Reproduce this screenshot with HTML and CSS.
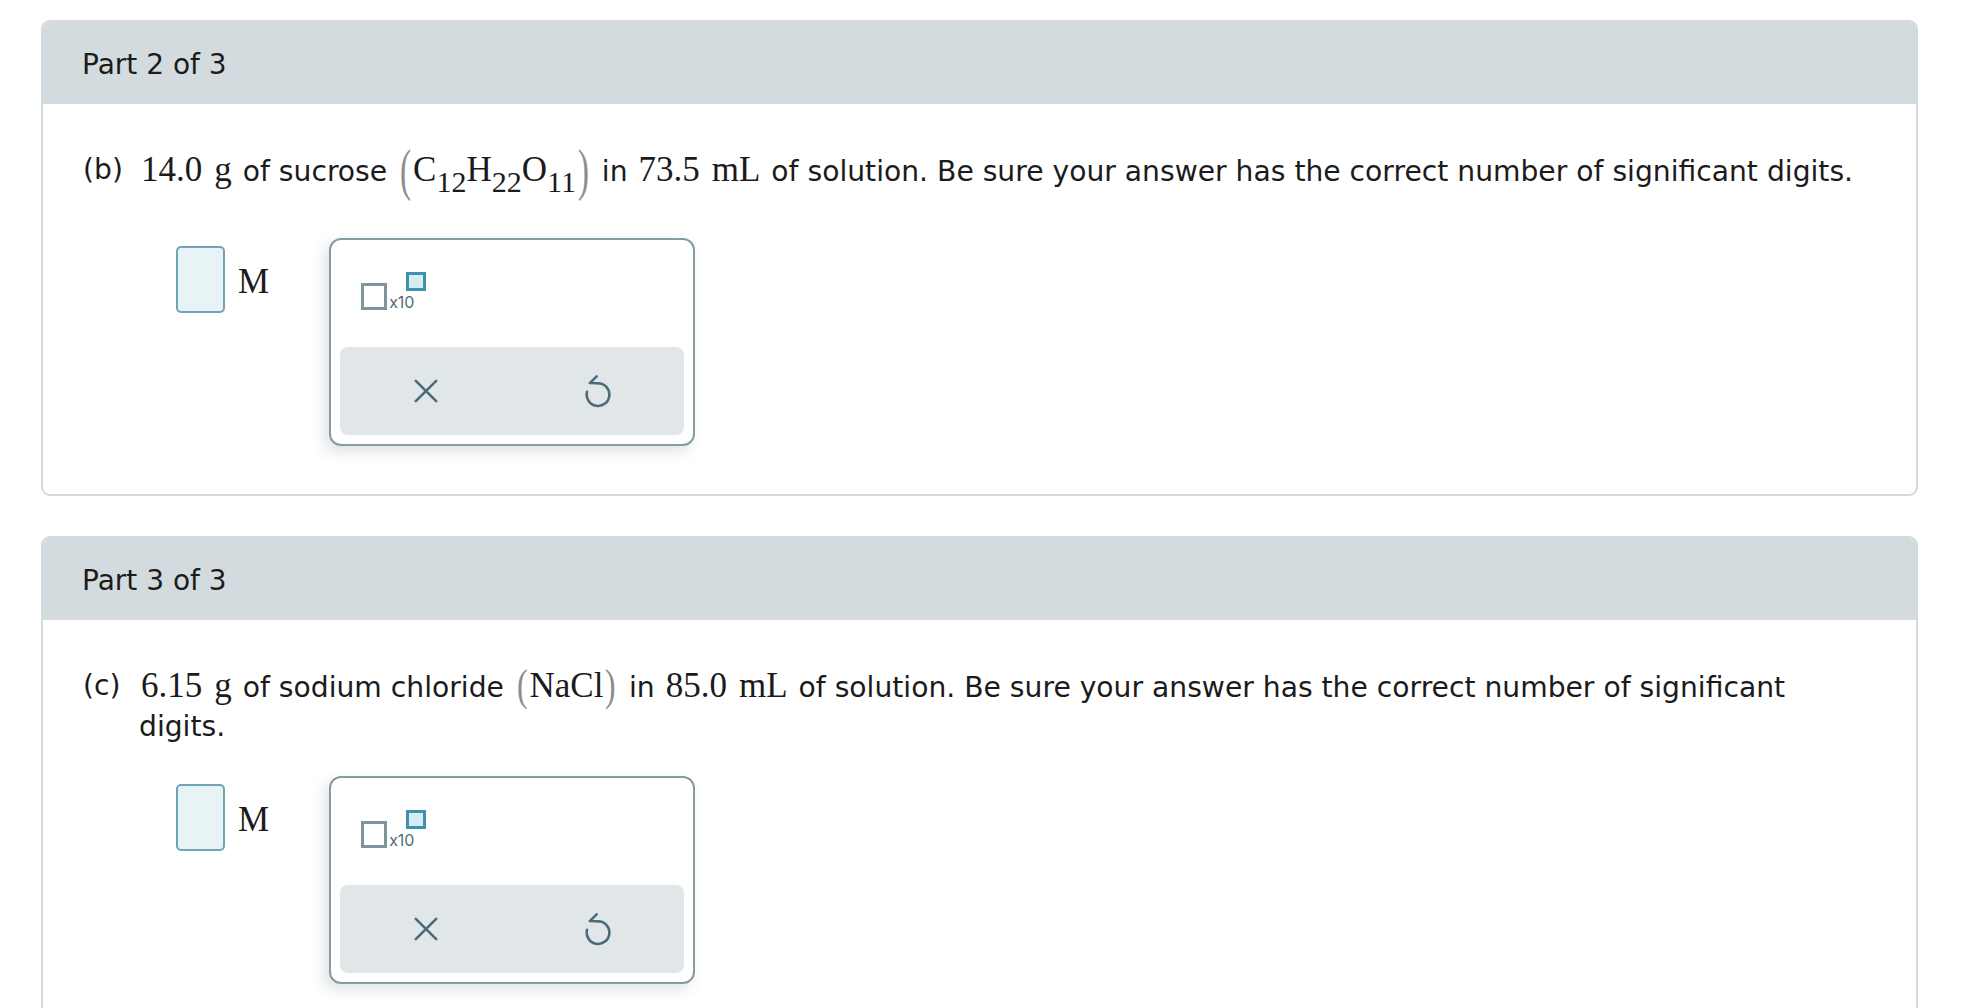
FILE: index.html
```html
<!DOCTYPE html>
<html lang="en">
<head>
<meta charset="utf-8">
<title>Parts</title>
<link rel="stylesheet" href="styles.css">
</head>
<body>
<div class="page">
  <section class="card">
    <div class="card-head">Part 2 of 3</div>
    <div class="card-body">
      <p class="q">
        <span class="q-label">(b)</span>
        <span class="q-text"><span class="m">14.0<span class="sp"></span>g</span> <span>of sucrose</span> <span class="chem"><span class="paren paren-tall">(</span>C<sub>12</sub>H<sub>22</sub>O<sub>11</sub><span class="paren paren-tall">)</span></span> <span>in</span> <span class="m">73.5<span class="sp"></span>mL</span> <span>of solution.</span> <span>Be sure your answer has the correct number of significant</span> <span>digits.</span></span>
      </p>
      <div class="answer answer-tall">
        <span class="ans-box"></span>
        <span class="unit">M</span>
        <div class="pad">
          <div class="pad-tpl">
            <span class="tpl-box"></span><span class="tpl-x">x10</span><span class="tpl-sup"></span>
          </div>
          <div class="pad-bar">
            <button class="pad-btn" type="button" aria-label="Clear">
              <svg width="24" height="24" viewBox="0 0 24 24"><path d="M1.8 1.8 L22.2 22.2 M22.2 1.8 L1.8 22.2" fill="none" stroke="#4b6b79" stroke-width="2.6" stroke-linecap="round"/></svg>
            </button>
            <button class="pad-btn" type="button" aria-label="Undo">
              <svg width="27" height="33" viewBox="0 0 26 32"><path d="M12.5 8 A11 11 0 1 1 1.9 16.2" fill="none" stroke="#4b6b79" stroke-width="2.5" stroke-linecap="round"/><path d="M11.2 1.3 L4.6 7.8 L12.5 8" fill="none" stroke="#4b6b79" stroke-width="2.5" stroke-linecap="round" stroke-linejoin="round"/></svg>
            </button>
          </div>
        </div>
      </div>
    </div>
  </section>

  <section class="card">
    <div class="card-head">Part 3 of 3</div>
    <div class="card-body">
      <p class="q">
        <span class="q-label">(c)</span>
        <span class="q-text"><span class="m">6.15<span class="sp"></span>g</span> <span>of sodium chloride</span> <span class="chem"><span class="paren">(</span>NaCl<span class="paren">)</span></span> <span>in</span> <span class="m">85.0<span class="sp"></span>mL</span> <span>of solution.</span> <span>Be sure your answer has the correct number of significant</span> <span>digits.</span></span>
      </p>
      <div class="answer">
        <span class="ans-box"></span>
        <span class="unit">M</span>
        <div class="pad">
          <div class="pad-tpl">
            <span class="tpl-box"></span><span class="tpl-x">x10</span><span class="tpl-sup"></span>
          </div>
          <div class="pad-bar">
            <button class="pad-btn" type="button" aria-label="Clear">
              <svg width="24" height="24" viewBox="0 0 24 24"><path d="M1.8 1.8 L22.2 22.2 M22.2 1.8 L1.8 22.2" fill="none" stroke="#4b6b79" stroke-width="2.6" stroke-linecap="round"/></svg>
            </button>
            <button class="pad-btn" type="button" aria-label="Undo">
              <svg width="27" height="33" viewBox="0 0 26 32"><path d="M12.5 8 A11 11 0 1 1 1.9 16.2" fill="none" stroke="#4b6b79" stroke-width="2.5" stroke-linecap="round"/><path d="M11.2 1.3 L4.6 7.8 L12.5 8" fill="none" stroke="#4b6b79" stroke-width="2.5" stroke-linecap="round" stroke-linejoin="round"/></svg>
            </button>
          </div>
        </div>
      </div>
    </div>
  </section>
</div>
</body>
</html>
```

FILE: styles.css
```css
html, body {
  margin: 0;
  background: #ffffff;
}
body {
  font-family: "DejaVu Sans", Verdana, sans-serif;
  color: #1b1b1b;
}
.page {
  padding: 20px 58px 0 41px;
  display: flex;
  flex-direction: column;
  gap: 40px;
}
.card {
  border: 2px solid #d3dadd;
  border-radius: 9px;
  background: #fff;
}
.card-head {
  height: 82px;
  box-sizing: border-box;
  padding: 3px 0 0 39px;
  background: #d3dbdf;
  border-radius: 7px 7px 0 0;
  display: flex;
  align-items: center;
  font-size: 28px;
  color: #1b1b1b;
}
.card-body {
  padding: 46px 51px 48px 40px;
}
.q {
  display: flex;
  margin: 0;
  font-size: 28.2px;
  line-height: 39px;
}
.q-label {
  flex: 0 0 56px;
}
.q-text {
  flex: 1;
}
.m, .chem {
  font-family: "Liberation Serif", "Times New Roman", serif;
  font-size: 35px;
  padding: 0 2px;
}
.sp {
  display: inline-block;
  width: 12px;
}
.chem sub {
  font-size: 30px;
  line-height: 0;
  vertical-align: -11px;
}
.paren {
  display: inline-block;
  font-size: 44px;
  line-height: 39px;
  color: #8d8d8d;
  transform: scaleX(0.72);
  vertical-align: -3px;
}
.paren-tall {
  font-size: 57px;
  transform: scaleX(0.58);
  vertical-align: -8px;
  margin: 0 -2px;
}
.answer {
  display: flex;
  align-items: flex-start;
  margin: 30px 0 0 93px;
}
.answer-tall {
  margin-top: 47px;
}
.ans-box {
  width: 49px;
  height: 67px;
  box-sizing: border-box;
  border: 2px solid #6ea4b3;
  border-radius: 5px;
  background: #e8f3f6;
  margin-top: 8px;
}
.unit {
  font-family: "Liberation Serif", "Times New Roman", serif;
  font-size: 35px;
  line-height: 36px;
  margin: 26px 0 0 13px;
}
.pad {
  width: 366px;
  height: 208px;
  box-sizing: border-box;
  margin-left: 60px;
  border: 2px solid #879ba4;
  border-radius: 12px;
  background: #fff;
  box-shadow: -5px 6px 14px rgba(60, 80, 90, 0.16);
  display: flex;
  flex-direction: column;
  padding: 32px 9px 9px;
}
.pad-tpl {
  display: flex;
  align-items: flex-start;
  padding-left: 21px;
}
.tpl-box {
  width: 26px;
  height: 27px;
  box-sizing: border-box;
  border: 3px solid #7f949d;
  margin-top: 11px;
}
.tpl-x {
  align-self: flex-end;
  font-family: Inter, "Liberation Sans", sans-serif;
  font-size: 16px;
  line-height: 16px;
  color: #4e6b78;
  margin-left: 2px;
}
.tpl-sup {
  width: 20px;
  height: 19px;
  box-sizing: border-box;
  border: 3px solid #3c93ab;
  background: #d6edf3;
  margin-left: -8px;
}
.pad-bar {
  margin-top: auto;
  height: 88px;
  background: #e1e6e9;
  border-radius: 8px;
  display: flex;
}
.pad-btn {
  flex: 1;
  display: flex;
  align-items: center;
  justify-content: center;
  border: 0;
  background: none;
  padding: 0;
}
.pad-btn svg {
  display: block;
}
```
